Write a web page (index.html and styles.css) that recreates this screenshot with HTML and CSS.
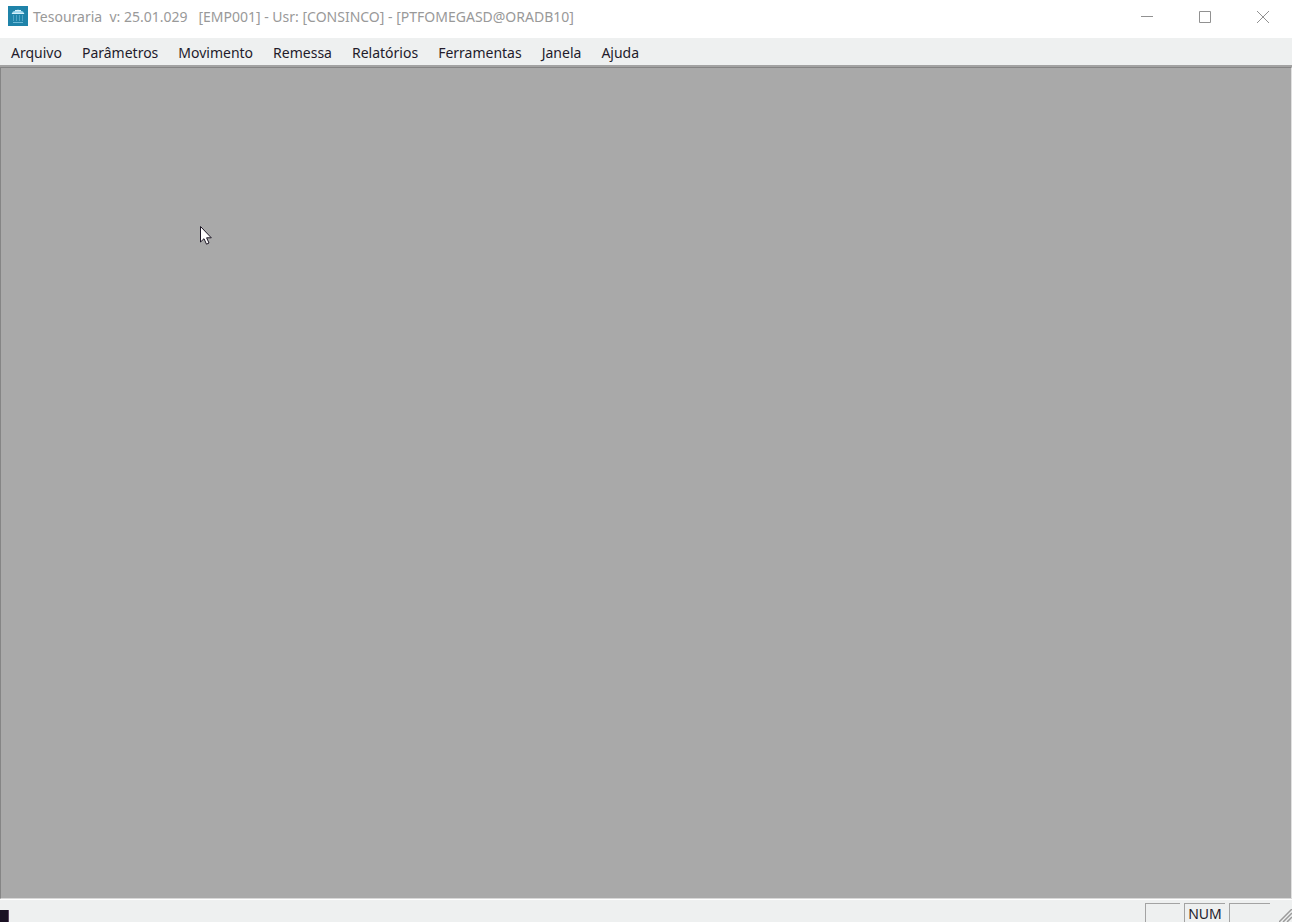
FILE: index.html
```html
<!DOCTYPE html>
<html lang="pt-BR">
<head>
<meta charset="utf-8">
<title>Tesouraria</title>
<link rel="stylesheet" href="styles.css">
</head>
<body>
<div class="window">
  <header class="titlebar">
    <svg class="app-icon" width="20" height="20" viewBox="0 0 20 20" aria-hidden="true">
      <rect width="20" height="20" fill="#1f83a9"/>
      <path d="M3.500 8 5 5.500 7 5 10 3.500 13 5l2 .5L16.500 8Z" fill="#a5d9ef"/>
      <path d="M7 4.500h6M4 7.500h12" stroke="#d5f0fa"/>
      <path d="M5.500 9v6M8.500 9v6M11.500 9v6M14.500 9v6" stroke="#4fa3c5"/>
      <path d="M5 16.500h10" stroke="#70bbd8"/>
    </svg>
    <h1 class="title">Tesouraria  v: 25.01.029   [EMP001] - Usr: [CONSINCO] - [PTFOMEGASD@ORADB10]</h1>
    <div class="controls">
      <button class="control" type="button" aria-label="Minimizar"><svg width="12" height="12" viewBox="0 0 12 12"><path d="M0 5.500h12"/></svg></button>
      <button class="control" type="button" aria-label="Maximizar"><svg width="12" height="12" viewBox="0 0 12 12"><path d="M.5.5h11v11H.5z"/></svg></button>
      <button class="control" type="button" aria-label="Fechar"><svg width="12" height="12" viewBox="0 0 12 12"><path d="m0 0 12 12M12 0 0 12"/></svg></button>
    </div>
  </header>
  <nav class="menubar">
    <button class="menu" type="button">Arquivo</button>
    <button class="menu" type="button">Parâmetros</button>
    <button class="menu" type="button">Movimento</button>
    <button class="menu" type="button">Remessa</button>
    <button class="menu" type="button">Relatórios</button>
    <button class="menu" type="button">Ferramentas</button>
    <button class="menu" type="button">Janela</button>
    <button class="menu" type="button">Ajuda</button>
  </nav>
  <main class="workspace"></main>
  <footer class="statusbar">
    <span class="corner"></span>
    <span class="cell"></span>
    <span class="cell cell-num">NUM</span>
    <span class="cell cell-last"></span>
    <svg class="grip" width="13" height="13" viewBox="0 0 13 13" aria-hidden="true"><path d="M0 13 13 0M4 13l9-9M8 13l5-5" stroke="#9b9b9b" stroke-width="1.500"/></svg>
  </footer>
</div>
<svg class="pointer" width="14" height="21" viewBox="0 0 14 21" aria-hidden="true"><path d="M1.500 1.500v15.500l3.500-3.300 2.500 5.500 2.500-1.200-2.400-5.200h4.700Z" fill="#fff" stroke="#1b1523"/></svg>
</body>
</html>
```
FILE: styles.css
```css
body {
  margin: 0;
}

.window {
  display: flex;
  flex-direction: column;
  height: 100vh;
  overflow: hidden;
  background: #eef0f0;
}

.titlebar {
  display: flex;
  align-items: center;
  flex: none;
  box-sizing: border-box;
  height: 38px;
  padding: 0 0 4px 8px;
  background: #fff;
}

.app-icon {
  flex: none;
  margin-bottom: 2px;
}

.title {
  flex: 1;
  margin: 0 0 0 5px;
  color: #999;
  font: 400 14px/20px "Noto Sans", sans-serif;
  white-space: pre;
}

.controls {
  display: flex;
}

.control {
  display: grid;
  place-items: center;
  width: 58px;
  height: 32px;
  padding: 0;
  border: 0;
  background: none;
}

.control svg {
  fill: none;
  stroke: #919191;
}

.menubar {
  display: flex;
  flex: none;
  height: 27px;
  padding-left: 1px;
}

.menu {
  padding: 2px 10px 0;
  border: 0;
  background: none;
  color: #231b2b;
  font: 14px/20px "Noto Sans", sans-serif;
}

.workspace {
  flex: 1;
  border: 1px solid #858585;
  border-right-color: #e0e0e0;
  border-bottom-color: #d8d8d8;
  background: #a9a9a9;
  box-shadow: 0 -2px #a3a3a3;
  margin-top: 2px;
}

.statusbar {
  display: flex;
  flex: none;
  align-items: flex-end;
  gap: 4px;
  height: 22px;
  border-top: 1px solid #fff;
}

.corner {
  width: 8px;
  height: 12px;
  margin-right: auto;
  border-right: 1px solid #5a4560;
  background: #1a1123;
}

.cell {
  box-sizing: border-box;
  width: 35px;
  height: 19px;
  border: 1px solid #a3a3a3;
  border-width: 1px 0 0 1px;
  color: #231b2b;
  font: 14px/19px "Noto Sans", sans-serif;
  text-align: center;
}

.cell-num,
.cell-last {
  width: 41px;
}

.grip {
  margin-left: 5px;
}

.pointer {
  position: absolute;
  top: 225px;
  left: 199px;
}
```
